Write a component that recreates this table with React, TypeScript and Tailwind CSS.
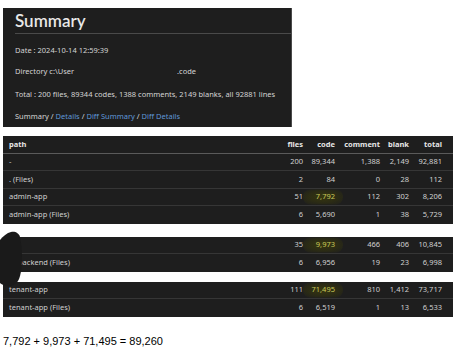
import React from "react";

type Row = { path: string; files: string; code: string; comment: string; blank: string; total: string; hl?: boolean; indent?: boolean };

const t1: Row[] = [
  { path: "-", files: "200", code: "89,344", comment: "1,388", blank: "2,149", total: "92,881" },
  { path: ". (Files)", files: "2", code: "84", comment: "0", blank: "28", total: "112" },
  { path: "admin-app", files: "51", code: "7,792", comment: "112", blank: "302", total: "8,206", hl: true },
  { path: "admin-app (Files)", files: "6", code: "5,690", comment: "1", blank: "38", total: "5,729" },
];
const t2: Row[] = [
  { path: "", files: "35", code: "9,973", comment: "466", blank: "406", total: "10,845", hl: true },
  { path: "backend (Files)", files: "6", code: "6,956", comment: "19", blank: "23", total: "6,998", indent: true },
];
const t3: Row[] = [
  { path: "tenant-app", files: "111", code: "71,495", comment: "810", blank: "1,412", total: "73,717", hl: true },
  { path: "tenant-app (Files)", files: "6", code: "6,519", comment: "1", blank: "13", total: "6,533" },
];

const grid = "grid grid-cols-[1fr_32px_32px_45px_29px_33px] pr-[11px] items-center";

function Cell({ children, hl }: { children: React.ReactNode; hl?: boolean }) {
  return (
    <div className="relative text-right">
      {hl && (
        <span className="absolute right-[-8px] top-1/2 -translate-y-1/2 h-[15px] w-[40px] rounded-[7px] bg-[radial-gradient(ellipse_at_center,#37370f_0%,#2b2b15_55%,rgba(30,30,30,0)_100%)]" />
      )}
      <span className={"relative " + (hl ? "text-[#c9c95a]" : "")}>{children}</span>
    </div>
  );
}

function TRow({ r, last }: { r: Row; last?: boolean }) {
  return (
    <div className={grid + " h-[17.5px] " + (last ? "" : "border-b border-[#363636]")}>
      <div className={r.indent ? "pl-[15px]" : "pl-[6px]"}>{r.path}</div>
      <Cell>{r.files}</Cell>
      <Cell hl={r.hl}>{r.code}</Cell>
      <Cell>{r.comment}</Cell>
      <Cell>{r.blank}</Cell>
      <Cell>{r.total}</Cell>
    </div>
  );
}

function Table({ rows, header }: { rows: Row[]; header?: boolean }) {
  return (
    <div className="ml-[3px] w-[450px] bg-[#1e1e1e] text-[#d0d0d0] text-[7.5px] leading-none">
      {header && (
        <div className={grid + " h-[17.5px] border-b border-[#5a5a5a] font-bold text-[#e6e6e6]"}>
          <div className="pl-[6px]">path</div>
          <div className="text-right">files</div>
          <div className="text-right">code</div>
          <div className="text-right">comment</div>
          <div className="text-right">blank</div>
          <div className="text-right">total</div>
        </div>
      )}
      {rows.map((r, i) => (
        <TRow key={i} r={r} last={i === rows.length - 1} />
      ))}
    </div>
  );
}

export default function App() {
  return (
    <div className="relative w-[474px] h-[355px] bg-white overflow-hidden" style={{ fontFamily: '"Noto Sans", "Open Sans", sans-serif' }}>
      <div className="pt-[8px]">
        <div className="ml-[3px] w-[289px] h-[119px] bg-[#1e1e1e] border-r border-[#4a4a4a] pl-[12px] text-[#d4d4d4] text-[7.5px] leading-none">
          <div
            className="pt-[4px] pb-[4px] text-[17px] font-semibold text-[#e8e8e8] border-b border-[#4a4a4a] leading-none"
            style={{ fontFamily: 'Lato, "Noto Sans", sans-serif' }}
          >
            Summary
          </div>
          <div className="mt-[13px]">Date : 2024-10-14 12:59:39</div>
          <div className="mt-[13.5px] flex">
            <span>Directory c:\User</span>
            <span className="ml-[103px]">.code</span>
          </div>
          <div className="mt-[15.5px]">Total : 200 files, 89344 codes, 1388 comments, 2149 blanks, all 92881 lines</div>
          <div className="mt-[14.5px]">
            Summary / <span className="text-[#5f97d8]">Details</span> / <span className="text-[#5f97d8]">Diff Summary</span> /{" "}
            <span className="text-[#5f97d8]">Diff Details</span>
          </div>
        </div>
        <div className="mt-[9px]">
          <Table rows={t1} header />
        </div>
        <div className="mt-[13px]">
          <Table rows={t2} />
        </div>
        <div className="mt-[10px]">
          <Table rows={t3} />
        </div>
        <div className="mt-[16px] ml-[3px] text-[11px] leading-[16px] text-black" style={{ fontFamily: '"Liberation Sans", Arial, sans-serif' }}>
          7,792 + 9,973 + 71,495 = 89,260
        </div>
      </div>
      <svg className="absolute left-0 top-[230px]" width="26" height="58" viewBox="0 0 26 58">
        <path
          d="M0 10 C3 6 7 3 11 2 C15 1 19 3 20 7 C21 12 22 20 22 28 C22 36 21 44 19 49 C17 54 12 57 6 56 C3 55 1 54 0 53 Z"
          fill="#1a1a1a"
        />
      </svg>
    </div>
  );
}
